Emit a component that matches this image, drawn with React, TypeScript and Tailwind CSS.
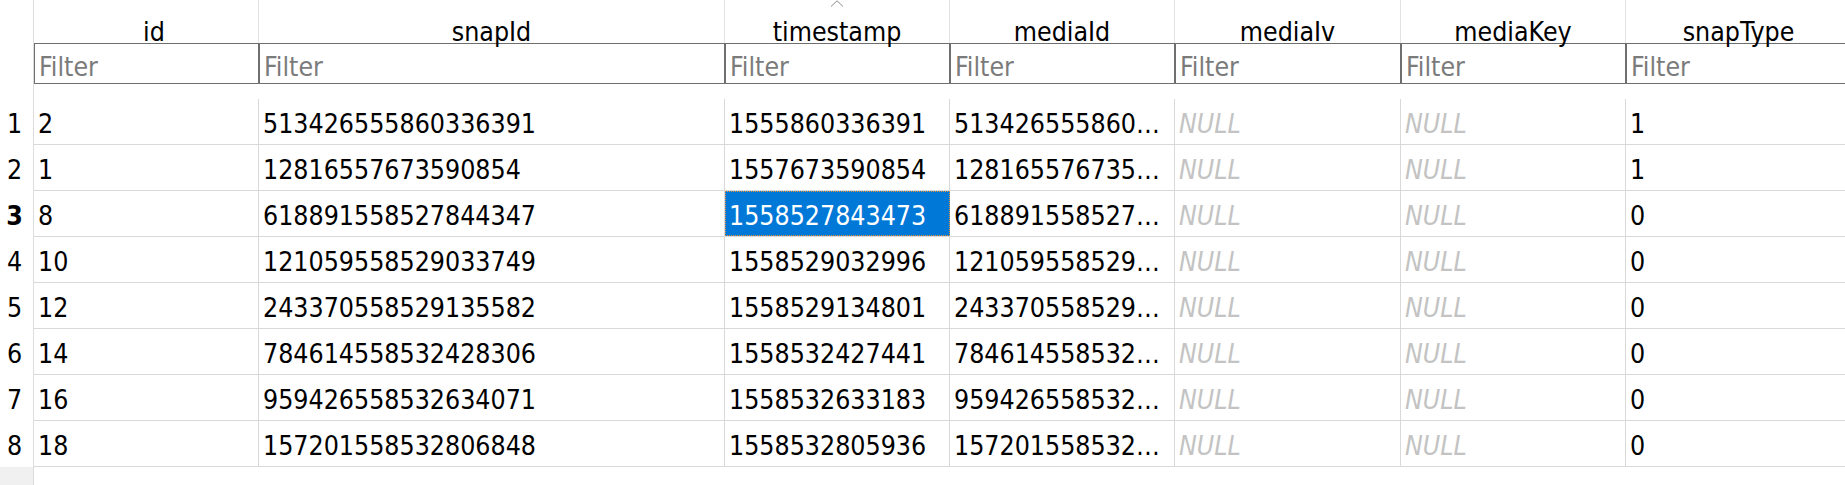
const font = "font-['DejaVu_Sans_Condensed','DejaVu_Sans',sans-serif] font-stretch-condensed";

type Col = { name: string; w: string; hdr: string };

const cols: Col[] = [
  { name: "id", w: "w-[225px]", hdr: "pl-[16px]" },
  { name: "snapId", w: "w-[466px]", hdr: "" },
  { name: "timestamp", w: "w-[225px]", hdr: "" },
  { name: "mediaId", w: "w-[225px]", hdr: "" },
  { name: "mediaIv", w: "w-[226px]", hdr: "" },
  { name: "mediaKey", w: "w-[225px]", hdr: "" },
  { name: "snapType", w: "w-[226px]", hdr: "" },
];

type Cell = string | null;

const rows: Cell[][] = [
  ["2", "513426555860336391", "1555860336391", "513426555860…", null, null, "1"],
  ["1", "12816557673590854", "1557673590854", "128165576735…", null, null, "1"],
  ["8", "618891558527844347", "1558527843473", "618891558527…", null, null, "0"],
  ["10", "121059558529033749", "1558529032996", "121059558529…", null, null, "0"],
  ["12", "243370558529135582", "1558529134801", "243370558529…", null, null, "0"],
  ["14", "784614558532428306", "1558532427441", "784614558532…", null, null, "0"],
  ["16", "959426558532634071", "1558532633183", "959426558532…", null, null, "0"],
  ["18", "157201558532806848", "1558532805936", "157201558532…", null, null, "0"],
];

// selected cell: row index 2, column timestamp
const SEL_ROW = 2;
const SEL_COL = 2;

function SortArrow() {
  return (
    <svg
      width="14"
      height="7"
      viewBox="0 0 14 7"
      className="absolute left-1/2 top-0 -translate-x-1/2"
    >
      <path d="M1 6.5 L7 0.8 L13 6.5" fill="none" stroke="#8a8a8a" strokeWidth="1" />
    </svg>
  );
}

export default function App() {
  return (
    <div className={`flex h-[485px] w-[1845px] overflow-hidden bg-white text-[26.5px] text-black ${font}`}>
      {/* row numbers */}
      <div className="flex w-[34px] shrink-0 flex-col border-r border-[#dcdcdc]">
        <div className="h-[43px] shrink-0" />
        <div className="h-[41px] shrink-0" />
        <div className="h-[15px] shrink-0" />
        {rows.map((_, i) => (
          <div
            key={i}
            className={
              i === SEL_ROW
                ? "h-[46px] shrink-0 pr-[4px] pt-[11px] text-center leading-[27px] font-bold"
                : "h-[46px] shrink-0 pr-[4px] pt-[11px] text-center leading-[27px]"
            }
          >
            {i + 1}
          </div>
        ))}
        <div className="flex-1 bg-[#f0f0f0]" />
      </div>

      <div className="flex min-w-0 flex-1 flex-col">
        {/* column headers */}
        <div className="flex h-[43px] shrink-0">
          {cols.map((c) => (
            <div
              key={c.name}
              className={`relative ${c.w} ${c.hdr} shrink-0 whitespace-nowrap border-r border-[#e3e3e3] pt-[18px] text-center leading-[27px]`}
            >
              {c.name === "timestamp" && <SortArrow />}
              {c.name}
            </div>
          ))}
        </div>

        {/* filters */}
        <div className="flex h-[41px] shrink-0">
          {cols.map((c) => (
            <div
              key={c.name}
              className={`${c.w} shrink-0 border border-[#6f6f6f] pl-[4px] pt-[9px] leading-[27px] text-[#7b7b7b]`}
            >
              Filter
            </div>
          ))}
        </div>

        <div className="h-[15px] shrink-0" />

        {/* data */}
        {rows.map((r, ri) => (
          <div key={ri} className="flex h-[46px] shrink-0 border-b border-[#d9d9d9]">
            {r.map((v, ci) => {
              const c = cols[ci];
              if (ri === SEL_ROW && ci === SEL_COL) {
                return (
                  <div
                    key={ci}
                    className={`${c.w} shrink-0 overflow-hidden whitespace-nowrap border border-dotted border-[#e8953a] bg-[#0078d7] pl-[3px] pt-[10px] leading-[27px] text-white`}
                  >
                    {v}
                  </div>
                );
              }
              return (
                <div
                  key={ci}
                  className={`${c.w} shrink-0 overflow-hidden whitespace-nowrap border-r border-[#d9d9d9] pl-[4px] pt-[11px] leading-[27px]`}
                >
                  {v === null ? <span className="italic text-[#c3c3c3]">NULL</span> : v}
                </div>
              );
            })}
          </div>
        ))}
      </div>
    </div>
  );
}
